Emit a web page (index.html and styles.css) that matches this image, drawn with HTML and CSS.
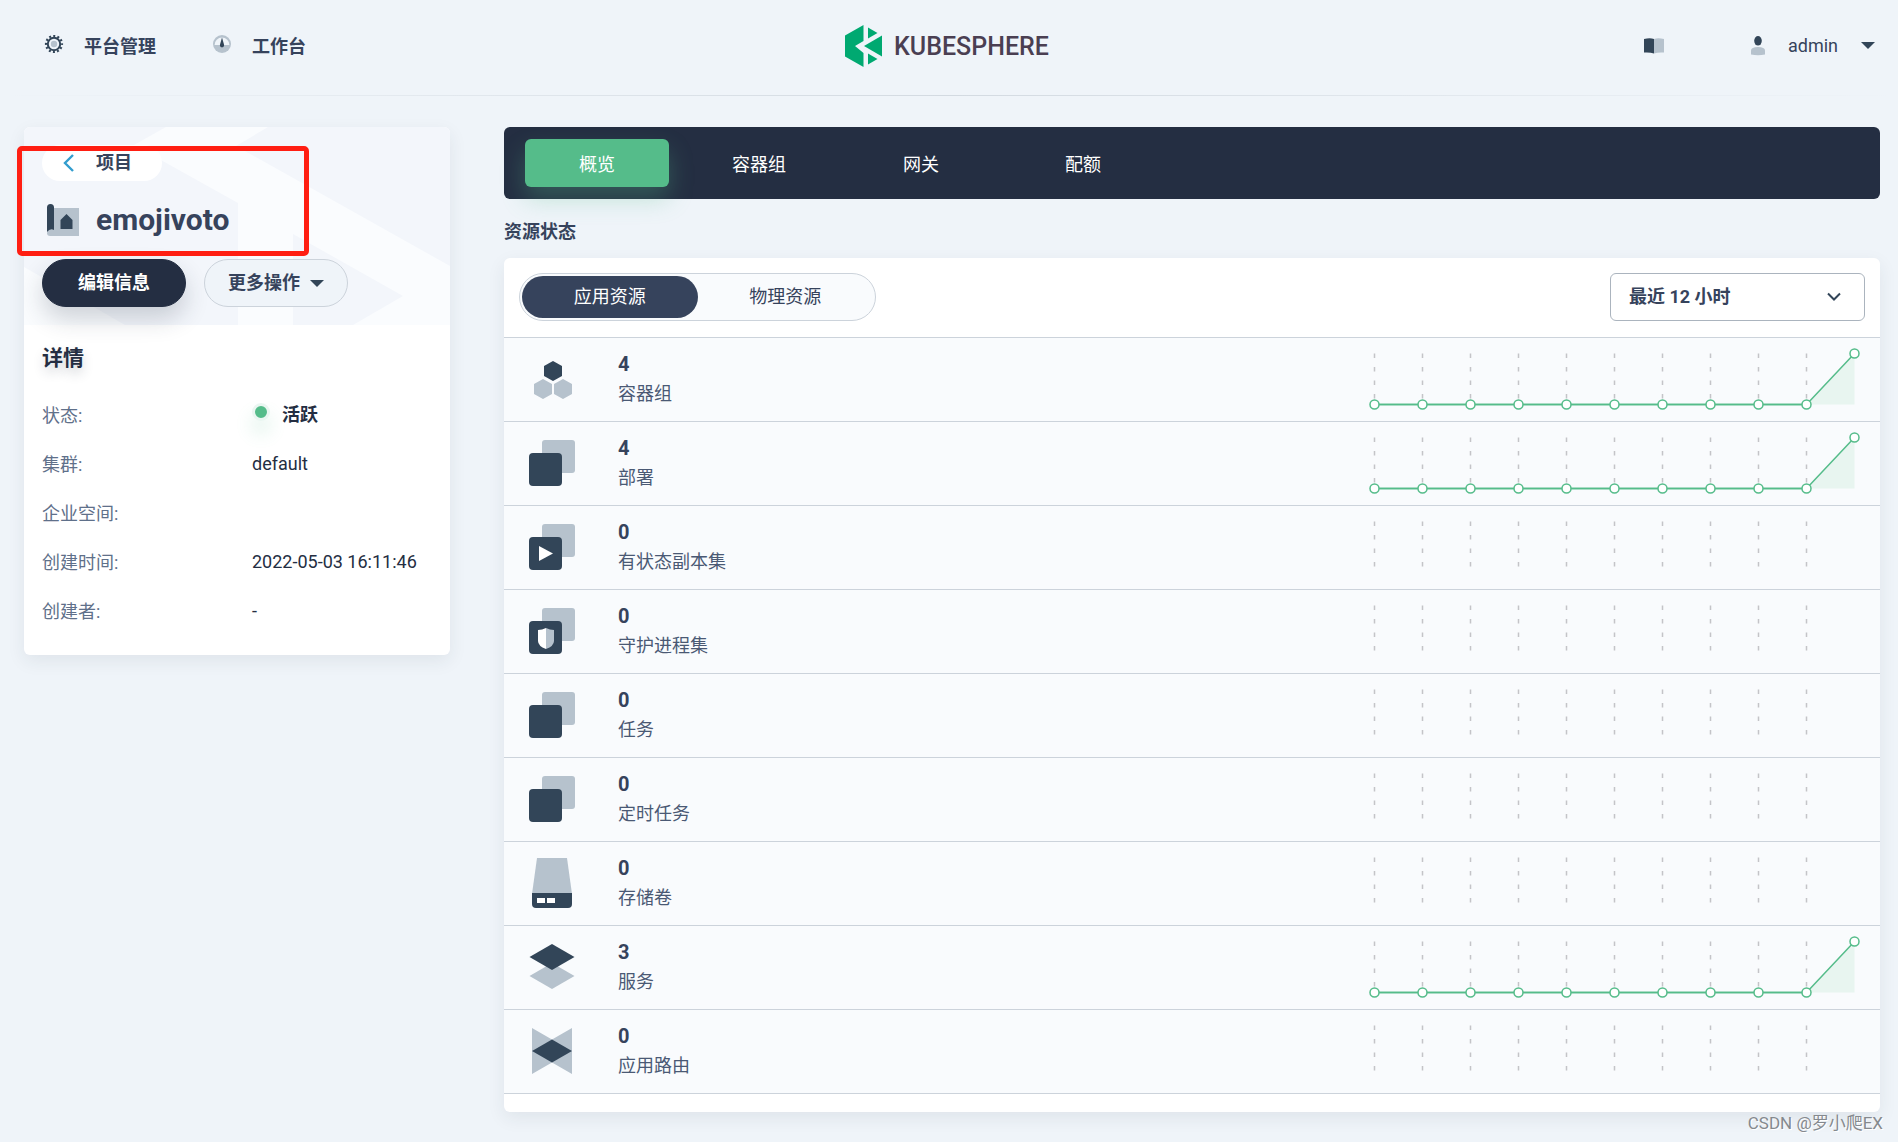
FILE: index.html
```html
<!DOCTYPE html>
<html lang="zh-CN">
<head>
    <meta charset="UTF-8">
    <meta name="viewport" content="width=device-width, initial-scale=1.0">
    <title>emojivoto - KubeSphere</title>
    <link rel="stylesheet" href="styles.css">
</head>
<body>
    <!-- shared icon and chart shapes -->
    <svg class="defs" width="0" height="0" aria-hidden="true">
        <symbol id="icon-stack" viewBox="0 0 48 48">
            <rect x="14" y="1" width="33" height="33" rx="3" fill="#b6c2cd"/>
            <rect x="1" y="14" width="33" height="33" rx="4" fill="#324558"/>
        </symbol>
        <symbol id="grid" viewBox="0 0 500 72">
            <path d="M10.5 10.5v51M58.5 10.5v51M106.5 10.5v51M154.5 10.5v51M202.5 10.5v51M250.5 10.5v51M298.5 10.5v51M346.5 10.5v51M394.5 10.5v51M442.5 10.5v51" stroke="#c4c4c8" stroke-width="1.5" stroke-dasharray="4.5 9"/>
        </symbol>
        <symbol id="trend" viewBox="0 0 500 72">
            <use href="#grid" width="500" height="72"/>
            <path d="M442.5 61.5L490.5 10.5V61.5z" fill="#e8f5f0"/>
            <path d="M10.5 61.5H442.5" stroke="#55bc8a" stroke-opacity=".3" stroke-width="3"/>
            <path d="M10.5 61.5H442.5L490.5 10.5" stroke="#55bc8a" stroke-width="1.5" fill="none"/>
            <g fill="#fff" stroke="#55bc8a" stroke-width="1.5">
                <circle cx="10.5" cy="61.5" r="4.5"/>
                <circle cx="58.5" cy="61.5" r="4.5"/>
                <circle cx="106.5" cy="61.5" r="4.5"/>
                <circle cx="154.5" cy="61.5" r="4.5"/>
                <circle cx="202.5" cy="61.5" r="4.5"/>
                <circle cx="250.5" cy="61.5" r="4.5"/>
                <circle cx="298.5" cy="61.5" r="4.5"/>
                <circle cx="346.5" cy="61.5" r="4.5"/>
                <circle cx="394.5" cy="61.5" r="4.5"/>
                <circle cx="442.5" cy="61.5" r="4.5"/>
                <circle cx="490.5" cy="10.5" r="4.5"/>
            </g>
        </symbol>
    </svg>

    <header class="header">
        <nav class="header-nav">
            <a class="header-link" href="#">
                <svg width="24" height="24" viewBox="0 0 24 24">
                    <circle cx="12" cy="12" r="8" fill="none" stroke="#324558" stroke-width="2.2" stroke-dasharray="2 2.189" stroke-dashoffset="1"/>
                    <circle cx="12" cy="12" r="6.2" fill="none" stroke="#324558" stroke-width="2"/>
                    <circle cx="12" cy="12" r="3.2" fill="#b6c2cd"/>
                </svg>
                <span>平台管理</span>
            </a>
            <a class="header-link" href="#">
                <svg width="24" height="24" viewBox="0 0 24 24">
                    <circle cx="12" cy="12" r="9" fill="#b6c2cd"/>
                    <path d="M4.6 13a7.4 7.4 0 0 1 14.8 0z" fill="#eff4f9"/>
                    <path d="M12 5.5l2 7a2.1 2.1 0 1 1-4 0z" fill="#324558"/>
                </svg>
                <span>工作台</span>
            </a>
        </nav>
        <a class="logo" href="#">
            <svg width="38" height="42" viewBox="0 0 38 42">
                <g fill="#00a971">
                    <path d="M18.5 0L0 10.5v21L18.5 42V28L10 21l8.5-5z"/>
                    <path d="M23 2.5l9.5 5.5L23 13.5z"/>
                    <path d="M37 10.5v21L19 21z"/>
                    <path d="M23 28.5l9.5 5.5-9.5 5.5z"/>
                </g>
            </svg>
            <span>KUBESPHERE</span>
        </a>
        <div class="header-user">
            <a class="docs" href="#" aria-label="文档">
                <svg width="20" height="16" viewBox="0 0 20 16">
                    <path d="M0 1q6-1.5 10 0v14.5Q6 14 0 14.5z" fill="#324558"/>
                    <path d="M20 1q-6-1.5-10 0v14.5q4-1.5 10-1z" fill="#b6c2cd"/>
                </svg>
            </a>
            <button class="user-menu" type="button">
                <svg width="14" height="20" viewBox="0 0 14 20">
                    <ellipse cx="7" cy="4.8" rx="3.8" ry="4.8" fill="#324558"/>
                    <path d="M0 14.5Q0 11 7 11t7 3.5v4Q7 20 0 18.5z" fill="#b6c2cd"/>
                </svg>
                <span>admin</span>
                <svg width="14" height="7" viewBox="0 0 14 7"><path d="M0 0h14L7 7z" fill="#324558"/></svg>
            </button>
        </div>
    </header>

    <div class="page">
        <aside class="sidebar">
            <div class="summary">
                <svg class="summary-bg" viewBox="0 0 426 198" preserveAspectRatio="xMidYMid slice">
                    <path d="M142 0H244L212 19 426 139V198H329L379 169 269 107V198H214V76L110 18zM0 140L101 198H0z" fill="#fafcfe"/>
                </svg>
                <a class="back" href="#">
                    <svg width="12" height="18" viewBox="0 0 12 18"><path d="M10 1L2 9l8 8" fill="none" stroke="#329dce" stroke-width="2.4"/></svg>
                    <span>项目</span>
                </a>
                <h1 class="name">
                    <svg width="32" height="32" viewBox="0 0 32 32">
                        <path d="M6 4h26v28H3a3 3 0 0 1-3-3z" fill="#b6c2cd"/>
                        <path d="M0 3.5a3.5 3.5 0 0 1 7 0V26q-4-2-7 2z" fill="#324558"/>
                        <path d="M19.5 10l6 6v9h-12v-9z" fill="#324558"/>
                    </svg>
                    <span>emojivoto</span>
                </h1>
                <div class="actions">
                    <button class="btn btn-primary" type="button">编辑信息</button>
                    <button class="btn" type="button">
                        更多操作
                        <svg width="14" height="7" viewBox="0 0 14 7"><path d="M0 0h14L7 7z" fill="#324558"/></svg>
                    </button>
                </div>
            </div>
            <div class="details">
                <h2 class="details-title">详情</h2>
                <dl class="details-list">
                    <dt>状态:</dt>
                    <dd class="status"><i class="status-dot"></i>活跃</dd>
                    <dt>集群:</dt>
                    <dd>default</dd>
                    <dt>企业空间:</dt>
                    <dd></dd>
                    <dt>创建时间:</dt>
                    <dd>2022-05-03 16:11:46</dd>
                    <dt>创建者:</dt>
                    <dd>-</dd>
                </dl>
            </div>
        </aside>

        <main class="main">
            <nav class="tabs">
                <a class="tab active" href="#">概览</a>
                <a class="tab" href="#">容器组</a>
                <a class="tab" href="#">网关</a>
                <a class="tab" href="#">配额</a>
            </nav>
            <h2 class="section-title">资源状态</h2>
            <section class="card">
                <div class="card-head">
                    <div class="switch">
                        <button class="switch-item active" type="button">应用资源</button>
                        <button class="switch-item" type="button">物理资源</button>
                    </div>
                    <div class="range">
                        <select aria-label="时间范围">
                            <option>最近 12 小时</option>
                        </select>
                        <svg class="range-arrow" width="14" height="10" viewBox="0 0 14 10"><path d="M1 1.5l6 6 6-6" fill="none" stroke="#324558" stroke-width="2"/></svg>
                    </div>
                </div>
                <ul class="resources">
                    <li class="resource">
                        <svg class="resource-icon" viewBox="0 0 48 48">
                            <path d="M25 6l9 5v10l-9 5-9-5V11z" fill="#324558"/>
                            <path d="M15 24l9 5v10l-9 5-9-5V29zM35 24l9 5v10l-9 5-9-5V29z" fill="#b6c2cd"/>
                        </svg>
                        <div class="resource-text"><strong>4</strong><a href="#">容器组</a></div>
                        <svg class="chart" viewBox="0 0 500 72"><use href="#trend"/></svg>
                    </li>
                    <li class="resource">
                        <svg class="resource-icon" viewBox="0 0 48 48"><use href="#icon-stack"/></svg>
                        <div class="resource-text"><strong>4</strong><a href="#">部署</a></div>
                        <svg class="chart" viewBox="0 0 500 72"><use href="#trend"/></svg>
                    </li>
                    <li class="resource">
                        <svg class="resource-icon" viewBox="0 0 48 48">
                            <use href="#icon-stack"/>
                            <path d="M11 23l14 7.5L11 38z" fill="#fff"/>
                        </svg>
                        <div class="resource-text"><strong>0</strong><a href="#">有状态副本集</a></div>
                        <svg class="chart" viewBox="0 0 500 72"><use href="#grid"/></svg>
                    </li>
                    <li class="resource">
                        <svg class="resource-icon" viewBox="0 0 48 48">
                            <use href="#icon-stack"/>
                            <path d="M18 21q-4 2-8 2v11q0 5 8 8z" fill="#fff"/>
                            <path d="M18 21q4 2 8 2v11q0 5-8 8z" fill="#b6c2cd"/>
                        </svg>
                        <div class="resource-text"><strong>0</strong><a href="#">守护进程集</a></div>
                        <svg class="chart" viewBox="0 0 500 72"><use href="#grid"/></svg>
                    </li>
                    <li class="resource">
                        <svg class="resource-icon" viewBox="0 0 48 48"><use href="#icon-stack"/></svg>
                        <div class="resource-text"><strong>0</strong><a href="#">任务</a></div>
                        <svg class="chart" viewBox="0 0 500 72"><use href="#grid"/></svg>
                    </li>
                    <li class="resource">
                        <svg class="resource-icon" viewBox="0 0 48 48"><use href="#icon-stack"/></svg>
                        <div class="resource-text"><strong>0</strong><a href="#">定时任务</a></div>
                        <svg class="chart" viewBox="0 0 500 72"><use href="#grid"/></svg>
                    </li>
                    <li class="resource">
                        <svg class="resource-icon" viewBox="0 0 48 50">
                            <path d="M9 0h30l5 36H4z" fill="#b6c2cd"/>
                            <path d="M4 35h40v11a4 4 0 0 1-4 4H8a4 4 0 0 1-4-4z" fill="#324558"/>
                            <path d="M9 40h8v5H9zM19 40h8v5h-8z" fill="#fff"/>
                        </svg>
                        <div class="resource-text"><strong>0</strong><a href="#">存储卷</a></div>
                        <svg class="chart" viewBox="0 0 500 72"><use href="#grid"/></svg>
                    </li>
                    <li class="resource">
                        <svg class="resource-icon" viewBox="0 0 48 48">
                            <path d="M24 20l22.5 13L24 46 1.5 33z" fill="#b6c2cd"/>
                            <path d="M24 1l22.5 13L24 27 1.5 14z" fill="#324558"/>
                        </svg>
                        <div class="resource-text"><strong>3</strong><a href="#">服务</a></div>
                        <svg class="chart" viewBox="0 0 500 72"><use href="#trend"/></svg>
                    </li>
                    <li class="resource">
                        <svg class="resource-icon" viewBox="0 0 48 48">
                            <path d="M4 1l20 11.5L44 1v46L24 35.5 4 47z" fill="#b6c2cd"/>
                            <path d="M24 12.5L44 24 24 35.5 4 24z" fill="#324558"/>
                        </svg>
                        <div class="resource-text"><strong>0</strong><a href="#">应用路由</a></div>
                        <svg class="chart" viewBox="0 0 500 72"><use href="#grid"/></svg>
                    </li>
                </ul>
            </section>
        </main>
    </div>

    <div class="highlight"></div>
    <div class="watermark">CSDN @罗小爬EX</div>
</body>
</html>
```
FILE: styles.css
```css
* {
    box-sizing: border-box;
}
body {
    position: relative;
    margin: 0;
    background-color: #eff4f9;
    color: #36435c;
    font-family: Roboto, "Noto Sans CJK SC", sans-serif;
    font-size: 18px;
    line-height: 28px;
}
a {
    color: inherit;
    text-decoration: none;
}
h1, h2, ul, dl, dd {
    margin: 0;
    padding: 0;
}
button, select {
    font: inherit;
    color: inherit;
    cursor: pointer;
}
svg {
    flex-shrink: 0;
}
.defs {
    position: absolute;
}

/* header */
.header {
    display: grid;
    grid-template-columns: 1fr auto 1fr;
    align-items: center;
    height: 96px;
    padding: 0 23px 4px;
    border-bottom: 1px solid;
    border-image: linear-gradient(to right, rgba(204, 211, 219, 0), #d3dae1 50%, rgba(204, 211, 219, 0)) 1;
}
.header-nav {
    display: flex;
    gap: 54px;
    padding-left: 19px;
    font-weight: bold;
}
.header-link {
    display: flex;
    align-items: center;
    gap: 18px;
}
.header-link svg {
    margin-bottom: 4px;
}
.header-link span, .logo span {
    padding-top: 2px;
}
.logo {
    display: flex;
    align-items: center;
    gap: 11px;
    padding-right: 4px;
    color: #4a3f52;
    font-size: 25px;
    font-weight: 500;
}
.header-user {
    display: flex;
    align-items: center;
    justify-content: flex-end;
    gap: 87px;
}
.docs {
    display: flex;
}
.user-menu {
    display: flex;
    align-items: center;
    gap: 23px;
    padding: 0;
    border: none;
    background: none;
}

/* layout */
.page {
    display: flex;
    align-items: flex-start;
    gap: 54px;
    padding: 31px 18px 29px 24px;
}
.sidebar {
    flex: 0 0 426px;
    border-radius: 6px;
    background-color: #fff;
    box-shadow: 0 6px 18px rgba(36, 46, 66, 0.08);
    overflow: hidden;
}
.main {
    flex: 1;
    min-width: 0;
}

/* project summary */
.summary {
    position: relative;
    padding: 18px;
    background-color: #f3f6fb;
}
.summary-bg {
    position: absolute;
    top: 0;
    left: 0;
    width: 100%;
    height: 100%;
}
.back, .name, .actions {
    position: relative;
}
.back {
    display: flex;
    align-items: center;
    gap: 21px;
    width: 120px;
    height: 36px;
    padding-left: 21px;
    border-radius: 18px;
    background-color: #fff;
    font-weight: bold;
}
.name {
    display: flex;
    align-items: center;
    gap: 17px;
    height: 78px;
    padding-left: 5px;
    font-size: 30px;
    font-weight: bold;
}
.actions {
    display: flex;
    gap: 18px;
}
.btn {
    display: flex;
    align-items: center;
    justify-content: center;
    gap: 10px;
    width: 144px;
    height: 48px;
    padding: 0;
    border: 1px solid #ccd3db;
    border-radius: 24px;
    background-color: #eff4f9;
    font-weight: bold;
}
.btn-primary {
    border-color: #242e42;
    background-color: #242e42;
    color: #fff;
    box-shadow: 0 12px 24px rgba(36, 46, 66, 0.2);
}

/* details */
.details {
    padding: 18px;
    color: #242e42;
}
.details-title {
    font-size: 21px;
    line-height: 30px;
    text-shadow: 0 6px 12px rgba(36, 46, 66, 0.2);
}
.details-list {
    display: grid;
    grid-template-columns: 210px 1fr;
    grid-auto-rows: 49px;
    align-items: center;
    padding: 17px 0 2px;
}
.details-list dt {
    padding-top: 2px;
    color: #5f708a;
}
.status {
    display: flex;
    align-items: center;
    gap: 12px;
    font-weight: bold;
}
.status-dot {
    width: 18px;
    height: 18px;
    margin-bottom: 6px;
    border: 3px solid #eaf6f1;
    border-radius: 50%;
    background-color: #55bc8a;
    box-shadow: 0 12px 18px rgba(85, 188, 138, 0.2);
}

/* tabs */
.tabs {
    display: flex;
    gap: 18px;
    padding: 12px 21px;
    border-radius: 6px;
    background-color: #242e42;
}
.tab {
    min-width: 144px;
    height: 48px;
    padding-top: 2px;
    border-radius: 6px;
    color: #fff;
    line-height: 48px;
    text-align: center;
}
.tab.active {
    background-color: #55bc8a;
    box-shadow: 0 12px 24px rgba(85, 188, 138, 0.3);
}
.section-title {
    padding: 19px 0 12px;
    font-size: 18px;
}

/* resource card */
.card {
    padding-bottom: 18px;
    border-radius: 6px;
    background-color: #fff;
    box-shadow: 0 6px 18px rgba(36, 46, 66, 0.08);
}
.card-head {
    display: flex;
    align-items: center;
    justify-content: space-between;
    padding: 15px 15px 16px;
}
.switch {
    display: flex;
    width: 357px;
    height: 48px;
    padding: 2px;
    border: 1px solid #ccd3db;
    border-radius: 24px;
    background-color: #f9fbfd;
}
.switch-item {
    flex: 1;
    padding: 0;
    border: none;
    border-radius: 21px;
    background: none;
}
.switch-item.active {
    background-color: #36435c;
    color: #fff;
}
.range {
    position: relative;
    width: 255px;
}
.range select {
    display: block;
    width: 100%;
    height: 48px;
    padding: 0 18px;
    border: 1px solid #abb4be;
    border-radius: 6px;
    background-color: #fff;
    font-weight: bold;
    appearance: none;
}
.range-arrow {
    position: absolute;
    top: 19px;
    right: 24px;
    pointer-events: none;
}
.resources {
    border-top: 1px solid #ccd3db;
    list-style: none;
}
.resource {
    display: flex;
    align-items: center;
    height: 84px;
    padding: 0 16px 1px 24px;
    border-bottom: 1px solid #ccd3db;
    background-color: #f9fbfd;
}
.resource-icon {
    width: 48px;
    height: 50px;
}
.resource-text {
    display: flex;
    flex: 1;
    flex-direction: column;
    padding-left: 42px;
    color: #4a5974;
    line-height: 30px;
}
.resource-text strong {
    color: #36435c;
    font-size: 20px;
}
.chart {
    width: 500px;
    height: 72px;
}

/* overlays */
.highlight {
    position: absolute;
    top: 146px;
    left: 17px;
    width: 292px;
    height: 110px;
    border: 5px solid #ff1e12;
    border-radius: 5px;
    pointer-events: none;
}
.watermark {
    position: absolute;
    right: 15px;
    bottom: 5px;
    color: #85898e;
    font-size: 17px;
    line-height: 26px;
    text-shadow: 1px 1px 0 #fff;
}
```
